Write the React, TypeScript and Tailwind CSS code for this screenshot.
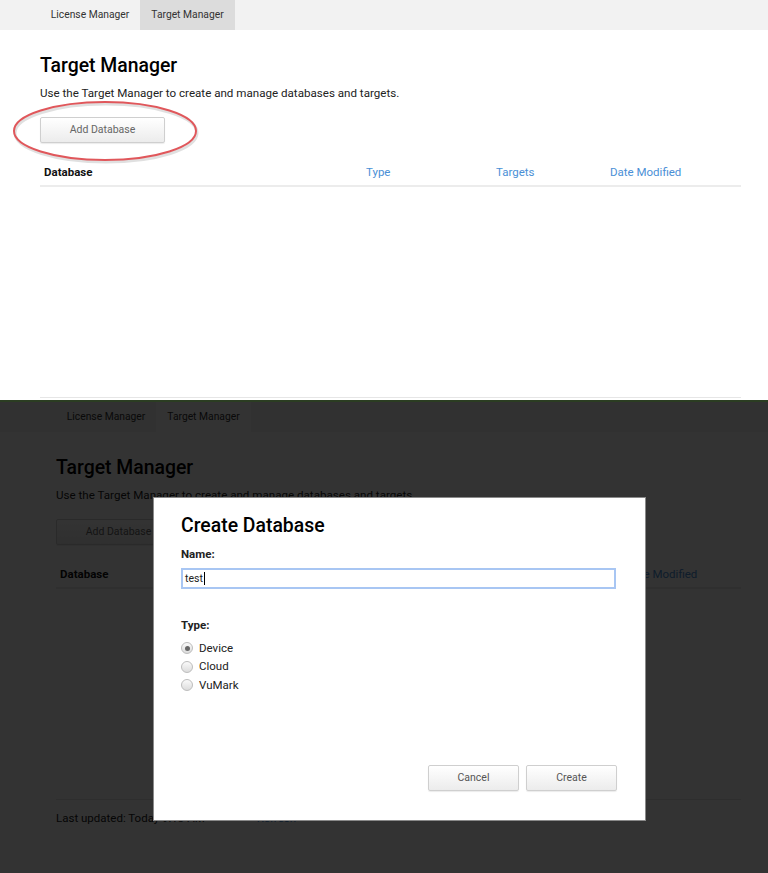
import React from 'react';

const font = { fontFamily: 'Roboto, "Liberation Sans", Arial, sans-serif' };

interface PageProps {
    inset: string;
    activeTab: string;
}

// One copy of the Target Manager page; rendered twice, the second one dimmed behind the dialog
const TargetManagerPage: React.FC<PageProps> = ({ inset, activeTab }) => (
    <div className="w-full bg-white">
        <div className={`flex h-[30px] bg-[#f2f2f2] ${inset}`}>
            <div className="flex w-[100px] shrink-0 items-center justify-center whitespace-nowrap text-[10.3px] text-[#333]">License Manager</div>
            <div className={`flex w-[95px] shrink-0 items-center justify-center whitespace-nowrap text-[10.3px] text-[#333] ${activeTab}`}>Target Manager</div>
        </div>
        <div className={`${inset} pr-[27px]`}>
            <h1 className="pt-[24px] text-[19.4px] leading-[24px] font-medium text-black">Target Manager</h1>
            <p className="mt-[7px] text-[11.6px] leading-[16px] text-[#222]">
                Use the Target Manager to create and manage databases and targets.
            </p>
            <button className="mt-[16px] h-[26px] w-[125px] rounded-[2px] border border-[#cfcfcf] bg-gradient-to-b from-white to-[#ececec] text-[10.5px] text-[#666] shadow-[0_1px_1px_rgba(0,0,0,0.08)]">
                Add Database
            </button>
            <div className="mt-[20px] grid h-[24px] grid-cols-[322px_130px_114px_1fr] items-center border-b-2 border-[#ececec] pl-[4px] pb-[2px] text-[11.5px]">
                <span className="font-bold text-[#111]">Database</span>
                <span className="text-[#4a8fd6]">Type</span>
                <span className="text-[#4a8fd6]">Targets</span>
                <span className="text-[#4a8fd6]">Date Modified</span>
            </div>
            <div className="h-[211px] border-b border-[#e6e6e6]"></div>
            <div className="flex gap-[52px] pt-[10px] text-[11.5px] text-[#222]">
                <span>Last updated: Today 9:13 AM</span>
                <span className="text-[#4a8fd6]">Refresh</span>
            </div>
        </div>
    </div>
);

const Radio: React.FC<{ label: string; checked?: boolean }> = ({ label, checked }) => (
    <label className="flex h-[18.5px] items-center gap-[6px] text-[11.5px] text-[#222]">
        <span className="flex h-[12px] w-[12px] items-center justify-center rounded-full border border-[#bdbdbd] bg-gradient-to-b from-[#fafafa] to-[#dcdcdc]">
            {checked && <span className="h-[5px] w-[5px] rounded-full bg-[#666]"></span>}
        </span>
        {label}
    </label>
);

const DialogButton: React.FC<{ children: React.ReactNode }> = ({ children }) => (
    <button className="h-[26px] w-[91px] rounded-[2px] border border-[#cfcfcf] bg-gradient-to-b from-white to-[#ececec] text-[10.5px] text-[#555] shadow-[0_1px_1px_rgba(0,0,0,0.08)]">
        {children}
    </button>
);

const CreateDatabaseDialog: React.FC = () => (
    <div className="absolute left-[153px] top-[95px] flex h-[324px] w-[493px] flex-col border border-[#8a8a8a] bg-white pl-[27px] pr-[28px] pb-[29px]">
        <h2 className="pt-[15px] text-[19.4px] leading-[26px] font-medium text-black">Create Database</h2>
        <div className="mt-[7px] text-[11.5px] font-bold leading-[16px] text-[#222]">Name:</div>
        <div className="mt-[6px] flex h-[21px] w-[435px] items-center border-2 border-[#a8c6f3] px-[2px] text-[10.5px] text-[#222]">
            test<span className="ml-px h-[13px] w-px bg-black"></span>
        </div>
        <div className="mt-[28px] text-[11.5px] font-bold leading-[16px] text-[#222]">Type:</div>
        <div className="mt-[6px] flex flex-col">
            <Radio label="Device" checked />
            <Radio label="Cloud" />
            <Radio label="VuMark" />
        </div>
        <div className="mt-auto flex justify-end gap-[7px]">
            <DialogButton>Cancel</DialogButton>
            <DialogButton>Create</DialogButton>
        </div>
    </div>
);

export default function App() {
    return (
        <div className="h-[873px] w-[768px] overflow-hidden bg-[#333]" style={font}>
            <div className="relative h-[400px] overflow-hidden bg-white">
                <TargetManagerPage inset="pl-[40px]" activeTab="bg-[#dcdcdc]" />
                <svg className="absolute left-[10px] top-[98px]" width="192" height="68" viewBox="0 0 192 68">
                    <ellipse cx="95" cy="33" rx="91" ry="29" fill="none" stroke="rgba(0,0,0,0.12)" strokeWidth="3" transform="translate(1 2)" />
                    <ellipse cx="95" cy="33" rx="91" ry="29" fill="none" stroke="#e0575b" strokeWidth="2" />
                </svg>
            </div>
            <div className="h-[2px] bg-[#2b3d22]"></div>
            <div className="relative h-[471px] overflow-hidden bg-white">
                <TargetManagerPage inset="pl-[56px]" activeTab="bg-white" />
                <div className="absolute inset-0 bg-black/80"></div>
                <CreateDatabaseDialog />
            </div>
        </div>
    );
}
